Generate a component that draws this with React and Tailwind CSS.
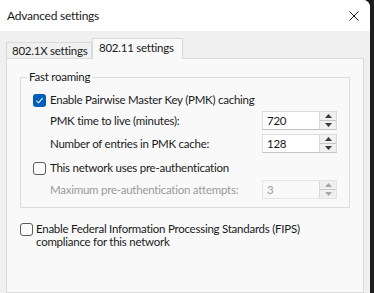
const font = { fontFamily: 'Lato, "Noto Sans", sans-serif' };

const CheckBox = ({ checked }) => (
  <span
    className={
      checked
        ? "w-[13px] h-[13px] rounded-[3px] bg-[#005fb8] flex items-center justify-center shrink-0"
        : "block w-[13px] h-[13px] rounded-[3px] border border-[#5c5c5c] bg-[#fbfbfb] shrink-0"
    }
  >
    {checked && (
      <svg width="9" height="9" viewBox="0 0 9 9">
        <path d="M1.5 4.8 L3.6 6.8 L7.6 2.2" fill="none" stroke="white" strokeWidth="1.1" />
      </svg>
    )}
  </span>
);

const Spinner = ({ value, disabled }) => (
  <div
    className={
      disabled
        ? "w-[75px] h-[19px] flex shrink-0 border border-[#e4e4e4] bg-[#f9f9f9]"
        : "w-[75px] h-[19px] flex shrink-0 border border-[#dadada] border-b-[#c4c4c4] bg-white"
    }
  >
    <span className={disabled ? "flex-1 pl-[4px] leading-[17px] text-[#9a9a9a]" : "flex-1 pl-[4px] leading-[17px] text-[#1a1a1a]"}>
      {value}
    </span>
    <div className="w-[17px] flex flex-col border-l border-[#dadada] bg-[#f0f0f0]">
      <div className="flex-1 flex items-center justify-center border-b border-[#c8c8c8]">
        <svg width="7" height="4" viewBox="0 0 7 4"><path d="M0 4 L3.5 0 L7 4Z" fill={disabled ? "#a8a8a8" : "#3a3a3a"} /></svg>
      </div>
      <div className="flex-1 flex items-center justify-center">
        <svg width="7" height="4" viewBox="0 0 7 4"><path d="M0 0 L3.5 4 L7 0Z" fill={disabled ? "#a8a8a8" : "#3a3a3a"} /></svg>
      </div>
    </div>
  </div>
);

export default function App() {
  return (
    <div
      className="w-[374px] h-[293px] bg-[#1e1e1e] overflow-hidden flex whitespace-nowrap text-[11.5px] tracking-[-0.25px]"
      style={font}
    >
      <div className="w-[370px] h-full bg-[#f0f0f0] rounded-tr-[7px] overflow-hidden flex flex-col text-[#1a1a1a]">
        <div className="h-[31px] bg-white flex items-center justify-between pl-[7px] pr-[11px] shrink-0">
          <span className="text-[12px]">Advanced settings</span>
          <svg width="10" height="10" viewBox="0 0 10 10">
            <path d="M0.5 0.5 L9.5 9.5 M9.5 0.5 L0.5 9.5" stroke="#1a1a1a" strokeWidth="1" />
          </svg>
        </div>

        <div className="flex-1 flex flex-col pl-[6px] pr-[6px] pt-[7px]">
          <div className="flex items-end h-[20px]">
            <div className="w-[86px] h-[16px] border border-b-0 border-[#dadada] bg-[#f0f0f0] pl-[5px] leading-[15px]">
              802.1X settings
            </div>
            <div className="w-[91px] h-[21px] -mb-[1px] border border-b-0 border-[#dadada] bg-[#f9f9f9] pl-[6px] leading-[17px] relative z-10">
              802.11 settings
            </div>
          </div>

          <div className="flex-1 border border-[#dadada] bg-[#f9f9f9] px-[13px] pt-[11px]">
            <div className="relative border border-[#dcdcdc] mt-[7px] pl-[12px] pr-[12px] pt-[15px] pb-[8px]">
              <span className="absolute left-[6px] -top-[8px] px-[2px] leading-[14px] bg-[#f9f9f9]">Fast roaming</span>
              <div className="flex items-center gap-[4px] h-[14px]">
                <CheckBox checked />
                <span>Enable Pairwise Master Key (PMK) caching</span>
              </div>
              <div className="flex items-center justify-between mt-[4px] pl-[17px]">
                <span>PMK time to live (minutes):</span>
                <Spinner value="720" />
              </div>
              <div className="flex items-center justify-between mt-[4px] pl-[17px]">
                <span>Number of entries in PMK cache:</span>
                <Spinner value="128" />
              </div>
              <div className="flex items-center gap-[4px] h-[14px] mt-[8px]">
                <CheckBox />
                <span>This network uses pre-authentication</span>
              </div>
              <div className="flex items-center justify-between mt-[5px] pl-[17px]">
                <span className="text-[#9a9a9a]">Maximum pre-authentication attempts:</span>
                <Spinner value="3" disabled />
              </div>
            </div>

            <div className="flex gap-[3px] mt-[14px] leading-[13px]">
              <div className="pt-[1px] shrink-0"><CheckBox /></div>
              <span>
                Enable Federal Information Processing Standards (FIPS)
                <br />
                compliance for this network
              </span>
            </div>
          </div>
        </div>
      </div>
    </div>
  );
}
